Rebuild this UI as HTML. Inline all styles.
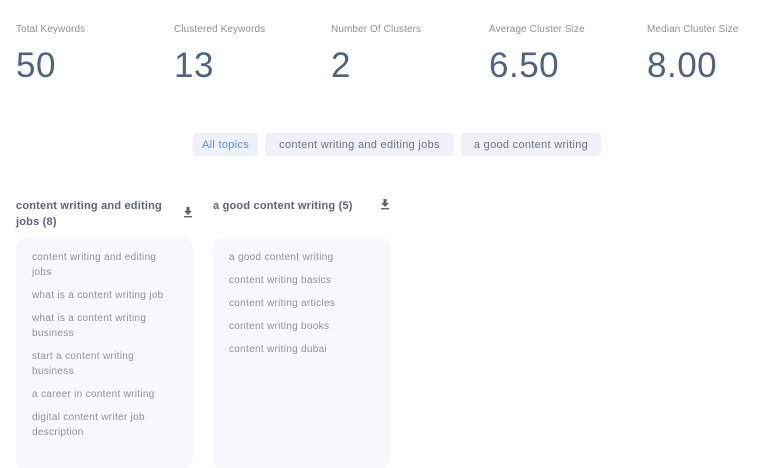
<!DOCTYPE html>
<html><head><style>
body{margin:0;width:768px;height:460px;background:#fff;font-family:"Liberation Sans",sans-serif;position:relative;overflow:hidden}
.a{position:absolute;white-space:nowrap}
.lbl{font-size:10px;color:#8b8f99;top:24px;letter-spacing:0.1px}
.num{font-size:35px;color:#4f6283;top:46px;letter-spacing:0.5px}
.pill{position:absolute;top:133px;height:23px;line-height:24px;background:#eef1f8;border-radius:4px;font-size:11px;color:#6b7280;padding:0 6px;box-sizing:border-box;text-align:center;letter-spacing:0.3px}
.hd{font-size:11px;font-weight:bold;color:#5a6275;line-height:16px;letter-spacing:0.2px}
.card{position:absolute;top:238px;background:#f7f8fc;border-radius:9px;height:230px;width:177px}
.it{position:absolute;font-size:10px;color:#8d919b;line-height:14.5px;letter-spacing:0.3px}
.dl{position:absolute;width:10px;height:12px}
</style></head><body>
<div class="a lbl" style="left:16px">Total Keywords</div>
<div class="a lbl" style="left:174px">Clustered Keywords</div>
<div class="a lbl" style="left:331px">Number Of Clusters</div>
<div class="a lbl" style="left:489px">Average Cluster Size</div>
<div class="a lbl" style="left:647px">Median Cluster Size</div>
<div class="a num" style="left:16px">50</div>
<div class="a num" style="left:174px">13</div>
<div class="a num" style="left:331px">2</div>
<div class="a num" style="left:489px">6.50</div>
<div class="a num" style="left:647px">8.00</div>

<div class="pill" style="left:193px;width:65px;color:#5b8def">All topics</div>
<div class="pill" style="left:265px;width:189px">content writing and editing jobs</div>
<div class="pill" style="left:461px;width:140px">a good content writing</div>

<div class="a hd" style="left:16px;top:198px;white-space:normal;width:160px">content writing and editing jobs (8)</div>
<div class="a hd" style="left:213px;top:198px">a good content writing (5)</div>
<svg class="dl" style="left:183px;top:206px" viewBox="0 0 10 12"><path d="M3.5 1h3v4h2.5L5 9 1 5h2.5z" fill="#5a6275"/><rect x="1" y="10" width="8" height="1.4" fill="#5a6275"/></svg>
<svg class="dl" style="left:380px;top:198px" viewBox="0 0 10 12"><path d="M3.5 1h3v4h2.5L5 9 1 5h2.5z" fill="#5a6275"/><rect x="1" y="10" width="8" height="1.4" fill="#5a6275"/></svg>

<div class="card" style="left:16px"></div>
<div class="card" style="left:213px"></div>
<div class="it" style="left:32px;top:251px;width:150px">content writing and editing<br>jobs</div>
<div class="it" style="left:32px;top:289px">what is a content writing job</div>
<div class="it" style="left:32px;top:312px">what is a content writing<br>business</div>
<div class="it" style="left:32px;top:350px">start a content writing<br>business</div>
<div class="it" style="left:32px;top:388px">a career in content writing</div>
<div class="it" style="left:32px;top:411px">digital content writer job<br>description</div>
<div class="it" style="left:229px;top:251px">a good content writing</div>
<div class="it" style="left:229px;top:274px">content writing basics</div>
<div class="it" style="left:229px;top:297px">content writing articles</div>
<div class="it" style="left:229px;top:320px">content writing books</div>
<div class="it" style="left:229px;top:343px">content writing dubai</div>
</body></html>
